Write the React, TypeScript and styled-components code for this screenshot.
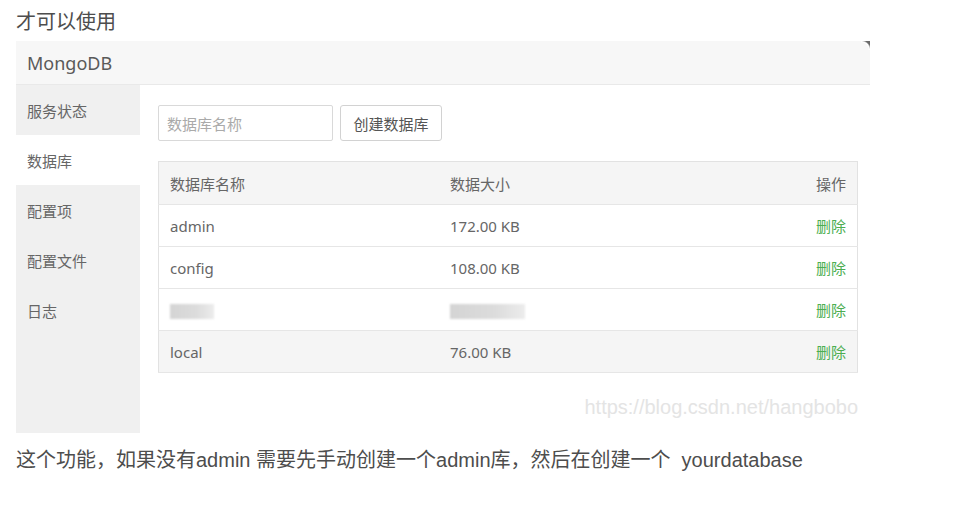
import { FC } from 'react'
import styled, { createGlobalStyle } from 'styled-components'

const GlobalStyle = createGlobalStyle`
  html, body {
    margin: 0;
    padding: 0;
    background: #fff;
  }
  body {
    font-family: 'Liberation Sans', 'Noto Sans CJK SC', sans-serif;
  }
`

const Page = styled('div')`
  padding: 9px 0 0 16px;
  width: 958px;
`

const Paragraph = styled('p')`
  margin: 0;
  font-size: 20px;
  line-height: 26px;
  color: #4d4d4d;
`

const Shot = styled('div')`
  position: relative;
  width: 854px;
  height: 392px;
  margin: 6px 0 14px 0;
  display: flex;
  flex-direction: column;
  font-family: 'Noto Sans CJK SC', 'Noto Sans', sans-serif;
  background: #fff;
`

const Corner = styled('span')`
  position: absolute;
  top: 0;
  right: 0;
  width: 9px;
  height: 9px;
  background: radial-gradient(circle at 0 100%, #f7f7f7 7px, #fff 8.5px, #6a6a6a 10px);
`

const Header = styled('div')`
  height: 43px;
  border-bottom: 1px solid #e9e9e9;
  background: #f7f7f7;
  display: flex;
  align-items: center;
  padding-left: 11px;
  font-family: 'Noto Sans', sans-serif;
  font-size: 18px;
  color: #5a5a5a;
`

const Body = styled('div')`
  flex: 1;
  display: flex;
`

const Sidebar = styled('ul')`
  list-style: none;
  margin: 0;
  padding: 0;
  width: 124px;
  background: #f0f0f0;
`

const NavItem = styled('li')<{ $active?: boolean }>`
  height: 50px;
  display: flex;
  align-items: center;
  padding-left: 11px;
  font-size: 15px;
  color: #666;
  background: ${(p) => (p.$active ? '#fff' : 'transparent')};
`

const Main = styled('div')`
  position: relative;
  flex: 1;
  padding: 20px 0 0 18px;
`

const Toolbar = styled('div')`
  display: flex;
  gap: 7px;
  margin-bottom: 20px;
`

const NameInput = styled('input')`
  box-sizing: border-box;
  width: 175px;
  height: 36px;
  padding: 0 8px;
  border: 1px solid #d9d9d9;
  border-radius: 2px;
  font-family: inherit;
  font-size: 15px;
  color: #555;
  outline: none;

  &::placeholder {
    color: #aaa;
  }
`

const Button = styled('button')`
  box-sizing: border-box;
  width: 102px;
  height: 36px;
  border: 1px solid #d2d2d2;
  border-radius: 3px;
  background: #fff;
  font-family: inherit;
  font-size: 15px;
  color: #555;
`

const Table = styled('table')`
  width: 700px;
  border-collapse: collapse;
  border: 1px solid #e2e2e2;
  font-size: 15px;
  color: #666;
`

const Row = styled('tr')<{ $shaded?: boolean }>`
  background: ${(p) => (p.$shaded ? '#f5f5f5' : '#fff')};
  border-bottom: 1px solid #e6e6e6;
`

const Cell = styled('td')<{ $head?: boolean; $right?: boolean }>`
  height: ${(p) => (p.$head ? '42px' : '41px')};
  padding: 0 11px;
  text-align: ${(p) => (p.$right ? 'right' : 'left')};
  vertical-align: middle;
  font-family: 'Noto Sans', 'Noto Sans CJK SC', sans-serif;
`

const NameCell = styled(Cell)`
  width: 258px;
`

const DeleteLink = styled('a')`
  color: #4cae50;
  text-decoration: none;
  font-family: 'Noto Sans CJK SC', sans-serif;
`

const Blur = styled('span')<{ $w: number }>`
  display: inline-block;
  width: ${(p) => p.$w}px;
  height: 15px;
  vertical-align: middle;
  background: linear-gradient(90deg, #d4d4d4 0%, #dcdcdc 60%, #ececec 100%);
  filter: blur(1px);
`

const Watermark = styled('span')`
  position: absolute;
  right: 12px;
  bottom: 14px;
  font-family: 'Liberation Sans', sans-serif;
  font-size: 20px;
  color: #e4e4e4;
`

const rows = [
  { name: 'admin', size: '172.00 KB' },
  { name: 'config', size: '108.00 KB' },
  { name: '', size: '', hidden: true },
  { name: 'local', size: '76.00 KB', shaded: true },
]

const navItems = ['服务状态', '数据库', '配置项', '配置文件', '日志']

const App: FC = () => {
  return (
    <>
      <GlobalStyle />
      <Page>
        <Paragraph>才可以使用</Paragraph>
        <Shot>
          <Corner />
          <Header>MongoDB</Header>
          <Body>
            <Sidebar>
              {navItems.map((item) => (
                <NavItem key={item} $active={item === '数据库'}>
                  {item}
                </NavItem>
              ))}
            </Sidebar>
            <Main>
              <Toolbar>
                <NameInput placeholder="数据库名称" />
                <Button type="button">创建数据库</Button>
              </Toolbar>
              <Table>
                <tbody>
                  <Row $shaded>
                    <NameCell $head>数据库名称</NameCell>
                    <Cell $head>数据大小</Cell>
                    <Cell $head $right>
                      操作
                    </Cell>
                  </Row>
                  {rows.map((r, i) => (
                    <Row key={i} $shaded={r.shaded}>
                      <NameCell>{r.hidden ? <Blur $w={44} /> : r.name}</NameCell>
                      <Cell>{r.hidden ? <Blur $w={75} /> : r.size}</Cell>
                      <Cell $right>
                        <DeleteLink href="#">删除</DeleteLink>
                      </Cell>
                    </Row>
                  ))}
                </tbody>
              </Table>
              <Watermark>https://blog.csdn.net/hangbobo</Watermark>
            </Main>
          </Body>
        </Shot>
        <Paragraph>
          这个功能，如果没有admin 需要先手动创建一个admin库，然后在创建一个&nbsp; yourdatabase
        </Paragraph>
      </Page>
    </>
  )
}

export default App
